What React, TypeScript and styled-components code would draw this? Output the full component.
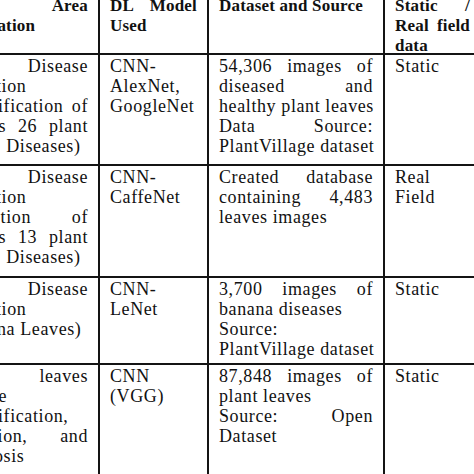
import styled, { createGlobalStyle } from 'styled-components';

const GlobalStyle = createGlobalStyle`
  html, body {
    margin: 0;
    padding: 0;
    background: #ffffff;
    overflow: hidden;
  }
`;

const Frame = styled.div`
  width: 474px;
  height: 474px;
  overflow: hidden;
  background: #ffffff;
`;

// the table is a crop of a bigger page, so it starts left of and above the window
const Sheet = styled.div`
  display: grid;
  grid-template-columns: 162px 109px 176px 97px;
  grid-template-rows: 59px 111px 112px 87px 140px;
  width: max-content;
  margin: -6px 0 0 -64px;
  border-top: 2px solid #141414;
  border-left: 2px solid #141414;
  color: #111111;
`;

const Cell = styled.div<{ $head?: boolean; $inset?: number }>`
  box-sizing: border-box;
  border-right: 2px solid #141414;
  border-bottom: 2px solid #141414;
  padding: ${(p) => (p.$head ? '0' : '1px')} 10px 0 ${(p) => p.$inset ?? 10}px;
  font-family: 'Liberation Serif', 'Times New Roman', serif;
  font-size: ${(p) => (p.$head ? '17px' : '18px')};
  font-weight: ${(p) => (p.$head ? 700 : 400)};
  letter-spacing: ${(p) => (p.$head ? '0.2px' : '0.6px')};
  line-height: 20px;
`;

const Line = styled.div<{ $fill?: boolean }>`
  white-space: nowrap;
  text-align: ${(p) => (p.$fill ? 'justify' : 'left')};
  text-align-last: ${(p) => (p.$fill ? 'justify' : 'left')};
`;

type Row = [string, boolean][][];

const header: Row = [
  [['Focus Area', true], ['Application', false]],
  [['DL Model', true], ['Used', false]],
  [['Dataset and Source', false]],
  [['Static /', true], ['Real field', true], ['data', false]],
];

const rows: Row[] = [
  [
    [
      ['Plant Disease', true],
      ['Detection', false],
      ['Quantification of', true],
      ['(across 26 plant', true],
      ['major\u00a0 Diseases)', false],
    ],
    [['CNN-', false], ['AlexNet,', false], ['GoogleNet', false]],
    [
      ['54,306 images of', true],
      ['diseased and', true],
      ['healthy plant leaves', true],
      ['Data Source:', true],
      ['PlantVillage dataset', false],
    ],
    [['Static', false]],
  ],
  [
    [
      ['Plant Disease', true],
      ['Detection', false],
      ['Prediction of', true],
      ['(across 13 plant', true],
      ['major\u00a0 Diseases)', false],
    ],
    [['CNN-', false], ['CaffeNet', false]],
    [
      ['Created database', true],
      ['containing 4,483', true],
      ['leaves images', false],
    ],
    [['Real', false], ['Field', false]],
  ],
  [
    [
      ['Plant Disease', true],
      ['Detection', false],
      ['(Banana Leaves)', false],
    ],
    [['CNN-', false], ['LeNet', false]],
    [
      ['3,700 images of', true],
      ['banana diseases', false],
      ['Source:', false],
      ['PlantVillage dataset', false],
    ],
    [['Static', false]],
  ],
  [
    [
      ['Plant leaves', true],
      ['disease', false],
      ['Quantification,', false],
      ['detection, and', true],
      ['diagnosis', false],
    ],
    [['CNN', false], ['(VGG)', false]],
    [
      ['87,848 images of', true],
      ['plant leaves', false],
      ['Source: Open', true],
      ['Dataset', false],
    ],
    [['Static', false]],
  ],
];

const renderRow = (row: Row, head: boolean, key: string) =>
  row.map((lines, c) => (
    <Cell key={`${key}-${c}`} $head={head} $inset={!head && c === 0 ? 13 : 10}>
      {lines.map(([text, fill], i) => (
        <Line key={i} $fill={fill}>
          {text}
        </Line>
      ))}
    </Cell>
  ));

const App = () => {
  return (
    <Frame>
      <GlobalStyle />
      <Sheet>
        {renderRow(header, true, 'h')}
        {rows.map((row, r) => renderRow(row, false, `r${r}`))}
      </Sheet>
    </Frame>
  );
};

export default App;
